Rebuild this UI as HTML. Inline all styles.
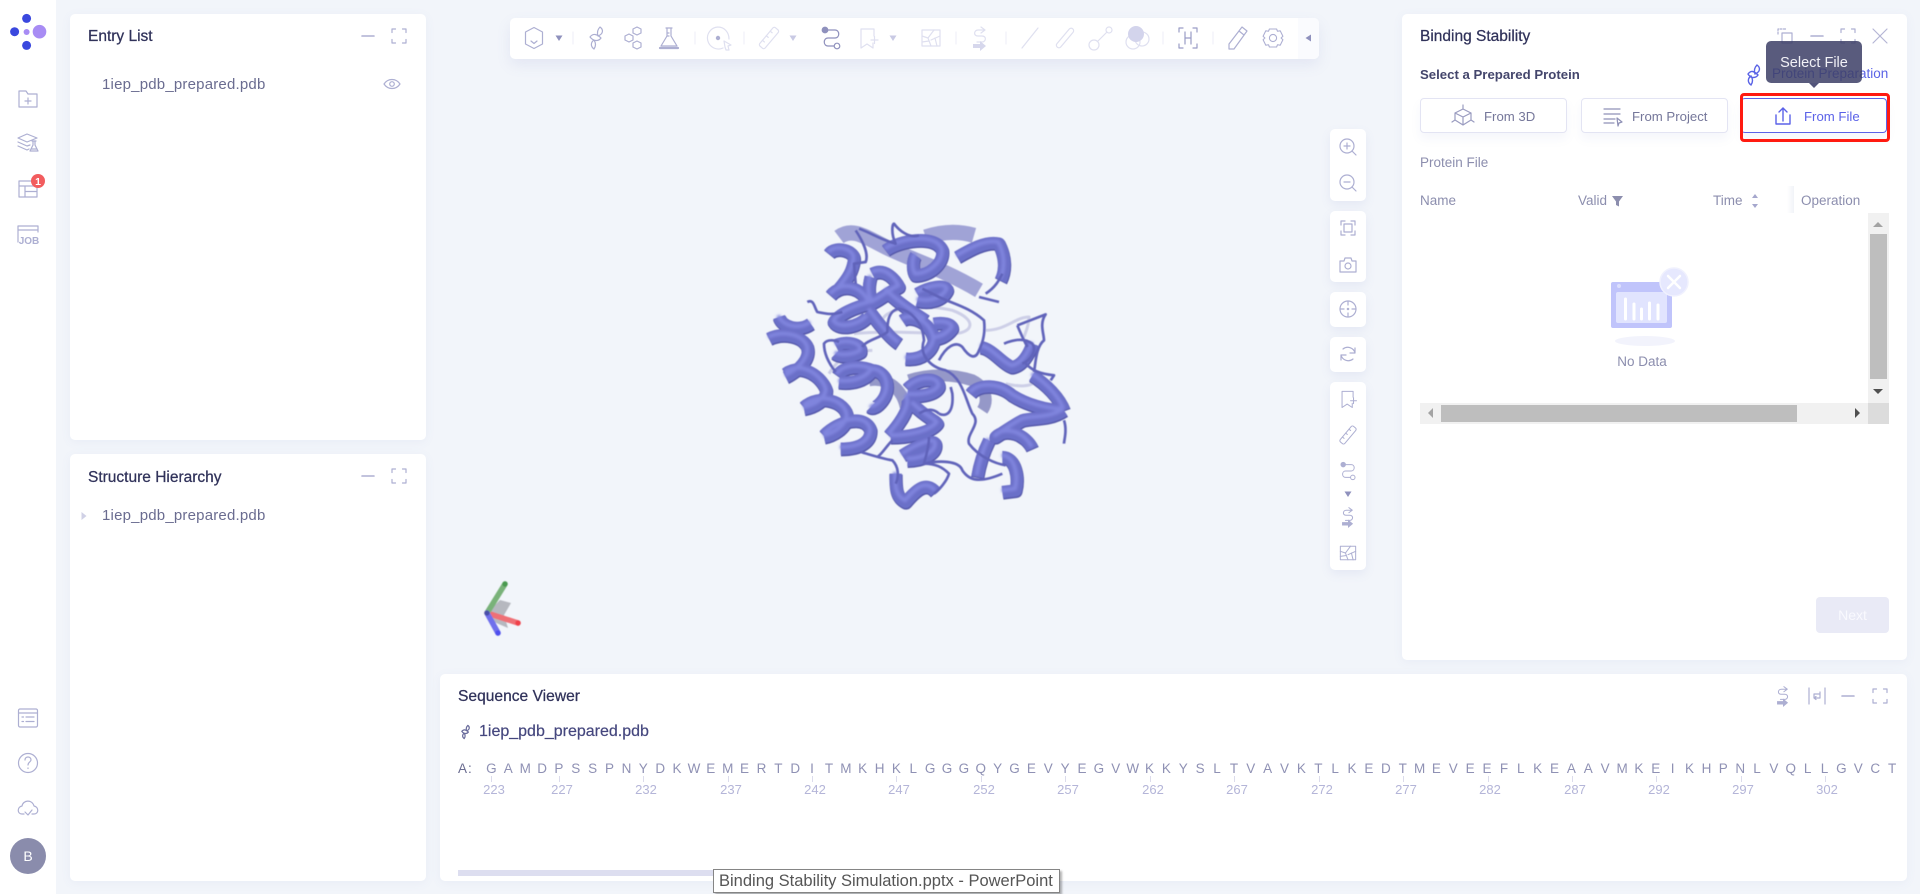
<!DOCTYPE html>
<html lang="en"><head><meta charset="utf-8"><title>Binding Stability</title>
<style>
html,body{margin:0;padding:0;width:1920px;height:894px;overflow:hidden;background:#f2f5fa;font-family:"Liberation Sans",sans-serif}
.p{position:absolute;background:#fff;border-radius:5px;box-shadow:0 2px 10px rgba(120,130,200,.07)}
.t{position:absolute;line-height:20px;white-space:nowrap}
.ti{font-size:15.5px;color:#30325a;-webkit-text-stroke:.25px #30325a}
.it{font-size:15px;color:#6a6c90}
.th{font-size:13.5px;color:#8c8eae}
.b{position:absolute;top:98px;height:35px;box-sizing:border-box;border:1px solid #e3e4f3;border-radius:4px;background:#fff;box-shadow:0 6px 10px rgba(120,130,200,.07)}
.bt{font-size:13.2px;color:#75779a;top:107px}
.n{position:absolute;top:780px;width:40px;margin-left:-20px;text-align:center;font-size:13px;line-height:20px;color:#b4b5d8}
.k{position:absolute;top:776px;width:1px;height:6px;background:#dcdcec}
#seq{position:absolute;left:483px;top:759px;white-space:nowrap;font-size:13.5px;line-height:20px;color:#8f91b4}
#seq i{display:inline-block;width:16.88px;text-align:center;font-style:normal}
svg{position:absolute;left:0;top:0}
</style></head><body>

<div class="p" style="left:0;top:0;width:56px;height:894px;border-radius:0;box-shadow:none"></div>
<div class="p" style="left:70px;top:14px;width:356px;height:426px"></div>
<div class="p" style="left:70px;top:454px;width:356px;height:427px"></div>
<div class="p" style="left:1402px;top:14px;width:505px;height:646px"></div>
<div class="p" style="left:440px;top:674px;width:1467px;height:207px"></div>
<div class="p" style="left:510px;top:18px;width:809px;height:41px;box-shadow:0 6px 14px rgba(120,130,200,.12)"></div>
<div style="position:absolute;left:1298px;top:18px;width:21px;height:41px;background:#fafbfe;border-radius:0 5px 5px 0"></div>
<div class="p" style="left:1330px;top:129px;width:36px;height:72px;box-shadow:0 4px 10px rgba(120,130,200,.1)"></div>
<div class="p" style="left:1330px;top:211px;width:36px;height:71px;box-shadow:0 4px 10px rgba(120,130,200,.1)"></div>
<div class="p" style="left:1330px;top:292px;width:36px;height:35px;box-shadow:0 4px 10px rgba(120,130,200,.1)"></div>
<div class="p" style="left:1330px;top:337px;width:36px;height:35px;box-shadow:0 4px 10px rgba(120,130,200,.1)"></div>
<div class="p" style="left:1330px;top:382px;width:36px;height:188px;box-shadow:0 4px 10px rgba(120,130,200,.1)"></div>

<!-- protein -->
<svg width="340" height="310" viewBox="0 0 1020 930" style="left:739px;top:207px" fill="none" stroke-linejoin="round">
<defs>
<filter id="bl"><feGaussianBlur stdDeviation="1.8"/></filter>
<filter id="bl2"><feGaussianBlur stdDeviation="4"/></filter>
<g id="thick">
<path d="M120 330C130 360 180 375 215 350"/>
<path d="M90 395C130 375 190 385 205 420C215 455 180 490 140 510"/>
<path d="M140 500C190 465 250 510 262 550C262 580 225 600 195 605"/>
<path d="M195 600C240 560 320 580 325 630C320 665 280 685 255 690"/>
<path d="M255 685C300 640 380 620 395 670C395 700 370 725 305 725"/>
<path d="M270 140C290 115 350 130 345 160C340 190 330 210 300 245"/>
<path d="M275 265C310 225 370 240 390 290C350 300 300 320 285 345C300 370 360 360 385 330"/>
<path d="M290 415C320 400 370 410 365 435C340 450 300 450 290 440"/>
<path d="M295 505C320 470 380 480 400 490C380 520 340 530 300 525"/>
<path d="M400 490C440 490 460 540 430 580C415 600 400 605 395 600"/>
<path d="M440 130C480 100 590 80 610 130C615 170 570 205 530 205C520 190 520 160 530 145"/>
<path d="M400 200C440 180 470 220 480 240C440 260 420 280 395 290"/>
<path d="M395 210C390 230 385 260 400 285"/>
<path d="M535 260C570 240 620 230 625 250C610 280 570 290 535 280"/>
<path d="M390 310C420 350 450 390 480 410"/>
<path d="M440 250C480 290 530 320 560 340"/>
<path d="M490 340C520 320 580 350 585 400C580 430 550 460 500 455"/>
<path d="M585 350C610 345 640 350 640 365C620 390 600 395 585 395"/>
<path d="M505 545C540 510 600 510 600 540C590 560 550 570 505 565"/>
<path d="M450 685C490 640 520 590 500 570"/>
<path d="M520 590C560 630 590 640 595 650C570 680 500 690 455 690"/>
<path d="M490 745C530 720 590 690 590 715C590 740 550 760 505 760"/>
<path d="M655 150C690 130 740 100 780 110C800 150 800 190 785 220"/>
<path d="M725 420C760 425 790 470 820 480C850 475 870 440 880 410"/>
<path d="M695 560C720 530 780 530 820 565C860 590 920 610 975 610"/>
<path d="M975 610C930 640 880 630 850 640C830 650 800 670 770 690C800 660 860 680 880 725"/>
<path d="M880 505C920 530 960 570 975 610"/>
<path d="M750 700C730 740 720 780 715 810"/>
<path d="M790 750C830 750 840 810 830 850L790 855"/>
<path d="M470 800C470 840 470 870 500 885C530 850 560 820 590 855"/>
</g>
<g id="thin">
<path d="M205 285C225 275 225 300 235 315C260 320 280 325 310 315"/>
<path d="M350 70C370 100 390 140 380 165L345 170L350 230"/>
<path d="M360 65C400 80 430 100 470 110C455 80 460 50 465 50C480 70 510 95 540 85"/>
<path d="M290 495C270 470 255 440 255 410C265 395 290 400 300 405"/>
<path d="M370 420C380 400 430 390 445 375C445 340 450 310 480 305C510 310 550 340 555 400C540 440 570 480 620 490C670 510 680 580 700 620C730 650 680 680 690 710C720 750 770 770 800 775"/>
<path d="M600 460C620 420 650 400 670 420C690 450 710 460 720 430C730 410 740 380 735 340C690 300 640 290 600 270L550 245"/>
<path d="M365 735C400 745 430 755 460 760C480 780 480 810 470 830"/>
<path d="M460 700C440 720 430 740 415 750"/>
<path d="M570 690C570 720 560 750 555 770C590 770 610 780 630 800C625 820 600 850 585 860"/>
<path d="M555 770C600 760 660 760 670 790C690 820 720 830 790 800"/>
<path d="M740 260C770 240 780 220 790 200M720 270L780 285"/>
<path d="M860 470C880 490 900 500 945 505L935 520"/>
<path d="M835 355L920 322C900 350 915 380 915 400C890 420 890 470 885 495M835 355C845 380 860 410 865 420"/>
<path d="M975 640C985 670 975 700 975 710"/>
<path d="M600 620C620 630 645 620 640 560L635 540"/>
<path d="M540 620C570 600 590 610 600 620"/>
<path d="M795 410C830 395 860 395 880 410C895 430 875 460 850 470"/>
</g>
</defs>
<g filter="url(#bl)">
<g stroke="#cdcfe7" stroke-width="9">
<path d="M430 340C440 300 560 290 640 310C720 340 700 380 640 380C560 380 450 370 345 380"/>
<path d="M270 500C300 450 340 430 400 430"/>
<path d="M740 370C800 370 830 330 870 330C870 350 860 380 850 400"/>
<path d="M800 530C840 540 880 540 890 520"/>
</g>
<g stroke="#a0a3d6" stroke-width="46">
<path d="M300 90C340 60 380 90 440 120C520 160 600 180 720 250"/>
<path d="M560 90C620 70 670 75 705 85"/>
</g>
<g stroke="#9598c8" stroke-width="36">
<path d="M390 520C450 510 490 550 500 600"/>
<path d="M510 520C570 500 640 500 700 520C740 540 750 580 730 610"/>
</g>
<use href="#thick" stroke="#5458aa" stroke-width="40" transform="translate(1 3)"/>
<use href="#thick" stroke="#6b6fc8" stroke-width="37"/>
<use href="#thick" stroke="#8085de" stroke-width="12" transform="translate(-2 -5)" filter="url(#bl2)"/>
<use href="#thin" stroke="#6064ba" stroke-width="8"/>
</g>
</svg>

<!-- axes -->
<svg width="60" height="70" viewBox="0 0 60 70" style="left:471px;top:575px" fill="none" stroke-linecap="round">
<g filter="url(#bl3)">
<path d="M29 25L40 28 33 40 37 53 23 47 16 38Z" fill="#8d8f97" opacity=".6"/>
<path d="M16 38L47 48" stroke="#ef7076" stroke-width="5.500"/>
<circle cx="47" cy="48" r="2.700" fill="#f04048"/>
<path d="M16 38L34 9" stroke="#79b279" stroke-width="5.500"/>
<circle cx="34" cy="9" r="2.700" fill="#4a9a50"/>
<path d="M16 38L27 58" stroke="#6f70ec" stroke-width="5.500"/>
<circle cx="27" cy="58" r="2.700" fill="#5050ee"/>
<circle cx="16" cy="38" r="2.600" fill="#4a4fa8"/>
</g>
<defs><filter id="bl3"><feGaussianBlur stdDeviation=".5"/></filter></defs>
</svg>

<!-- all icons in page coordinates -->
<svg width="1920" height="894" viewBox="0 0 1920 894" fill="none" stroke="#adafd2" stroke-width="1.200" stroke-linecap="round" stroke-linejoin="round">
<defs>
<path id="ex" d="M-7-3.500V-7H-3.500M3.500-7H7V-3.500M7 3.500V7H3.500M-3.500 7H-7V3.500"/>
<path id="mi" d="M-6 0H6" stroke-width="1.600"/>
<path id="tr" d="M-3.500-2.500H3.500L0 3Z" stroke="none"/>
<g id="sw"><path d="M4-8H-2C-6-8-7-2-2-2H2C7-2 6 4 2 4H-3M1-11L5-8 1-5"/><path d="M-7 6H0V3L6 8 0 13V10H-7Z" stroke="none" fill="currentColor"/></g>
<g id="bm"><path d="M6-2V-9H-7V10L-1 6 5 10V5M3 2H10M6.500-1.500V5.500"/></g>
<g id="pa"><circle cx="-6" cy="-8" r="2.800" fill="currentColor"/><path d="M-4-8H4C9-8 9 0 4 0H-3C-8 0-8 8-3 8H3"/><circle cx="6" cy="8" r="2.800"/></g>
<g id="ru"><g transform="rotate(40)"><rect x="-3.500" y="-12" width="7" height="24" rx="2"/><path d="M-3.500-6H-1M-3.500 0H-1M-3.500 6H-1"/></g></g>
<g id="mp"><rect x="-9" y="-8" width="18" height="16"/><path d="M-9-2L-3 0 3-8M-3 0L0 8M0 2L9-2M-9 4L-2 3M4 0L6 8"/></g>
<g id="dn"><path d="M3-11C7-8 6-4 1-2 0-5 0-8 3-11ZM-7-1C-4-5 0-4 4 0 2 3-3 4-7-1ZM-3 11C-7 8-6 4-3 2-1 5-1 8-3 11Z"/></g>
</defs>

<!-- logo -->
<g stroke="none">
<circle cx="26.600" cy="18.400" r="4.500" fill="#3a48de"/><circle cx="14.600" cy="31.700" r="4.500" fill="#3a48de"/><circle cx="26.600" cy="45.400" r="4.500" fill="#3a48de"/>
<circle cx="26.600" cy="32" r="3" fill="#a88cf4"/><circle cx="39.500" cy="31.700" r="6.800" fill="#a88cf4"/>
</g>
<!-- sidebar -->
<g transform="translate(28 99)"><path d="M-9-8H-2L0-5H9V8H-9Z"/><path d="M-3 2H3M0-1V5"/></g>
<g transform="translate(28 143)"><path d="M-10-5L-1-9 9-5-1-1ZM-10-1L-1 3 2 2M-10 3L-1 7 1 6"/><path d="M5-2V2L2 8H10L7 2V-2M4-2H8M3 6H9"/></g>
<g transform="translate(28 189)"><path d="M-9-8H9V8H-9ZM-9-3H9M-3-3V8M-3 2.500H9"/></g>
<g transform="translate(28 235)"><path d="M-10 7V-9H10V-3M-10-5H10"/><text x="1" y="9" font-family="Liberation Sans,sans-serif" font-size="10" font-weight="700" text-anchor="middle" fill="#adafd2" stroke="none">JOB</text></g>
<circle cx="38" cy="181" r="7" fill="#f25c5e" stroke="none"/>
<text x="38" y="185" font-family="Liberation Sans,sans-serif" font-size="10.500" font-weight="700" text-anchor="middle" fill="#fff" stroke="none">1</text>
<g transform="translate(28 718)"><rect x="-9.500" y="-9" width="19" height="18" rx="1.500"/><path d="M-9.500-5H9.500M-6-1H-4.500M-2-1H6M-6 3.500H-4.500M-2 3.500H6"/></g>
<g transform="translate(28 763)"><circle r="9.500"/><path d="M-3-3C-3-7 3-7 3-3 3-1 0-1 0 2"/><path d="M0 5V5.500"/></g>
<g transform="translate(28 808)"><path d="M-4 6H-6C-11 6-11-1-6-2-5-8 4-9 6-2 11-1 11 6 6 6H4"/><path d="M-3 4L0 7 4 2"/></g>
<circle cx="28" cy="856" r="18" fill="#8a8cac" stroke="none"/>

<!-- panel controls -->
<use href="#mi" x="368" y="36"/><use href="#ex" x="399" y="36"/>
<use href="#mi" x="368" y="476"/><use href="#ex" x="399" y="476"/>
<g transform="translate(392 84)"><path d="M-8 0C-4-6 4-6 8 0 4 6-4 6-8 0Z"/><circle r="2.300"/></g>
<path d="M81.500 512V520L86.500 516Z" fill="#d0d1e6" stroke="none"/>

<!-- top toolbar -->
<g>
<g transform="translate(534 38)"><path d="M0-10.500L8.500-6V6L0 10.500-8.500 6V-6Z"/><path d="M-3 3L0 5.500 3 3"/></g>
<use href="#tr" x="559" y="38" fill="#8f91bd"/>
<use href="#dn" x="597" y="38"/>
<g transform="translate(634 38)"><path d="M-1-9L3-11 7-9V-5L3-3-1-5ZM-9-2L-5-4-1-2V2L-5 4-9 2ZM-1 5L3 3 7 5V9L3 11-1 9Z"/></g>
<g transform="translate(669 38)"><path d="M-3-10H3M-2-10V-2L-8 8H8L2-2V-10M-2-5H0M-2-2H0"/><path d="M-9 10H9" stroke-width="2.200"/></g>
</g>
<g stroke="#dfe0f0">
<g transform="translate(718 38)"><path d="M0-11A11 11 0 1 0 5 10M0-11C6-11 11-6 11 1"/><circle r="1.600" fill="#adafd2" stroke="#adafd2"/><path d="M6 3L13 7 10 8 11 12 8 12 7 9Z"/></g>
<use href="#ru" x="769" y="38"/>
<use href="#tr" x="793" y="38" fill="#c9cae4"/>
<use href="#bm" x="868" y="38"/>
<use href="#tr" x="893" y="38" fill="#c9cae4"/>
<use href="#mp" x="931" y="38"/>
<use href="#sw" x="980" y="38" color="#d6d7ec"/>
<path d="M1022 48L1038 28"/>
<g transform="translate(1065 38) rotate(40)"><rect x="-2.500" y="-12" width="5" height="24" rx="2.500"/></g>
<g transform="translate(1101 38)"><circle cx="-7" cy="7" r="5"/><circle cx="8" cy="-8" r="3"/><path d="M-3 3L6-6"/></g>
<g transform="translate(1137 38)"><circle cx="-4" cy="4" r="7"/><circle cx="5" cy="1" r="7"/><circle cx="-1" cy="-4" r="8" fill="#d3d4ec" stroke="none"/></g>
</g>
<use href="#pa" x="831" y="38" color="#8f91bd" stroke="#8f91bd"/>
<path d="M573 32V44M695 32V44M744 32V44M956 32V44M1006 32V44M1163 32V44M1213 32V44" stroke="#f0f1f8"/>
<g transform="translate(1188 38)"><path d="M-5-10H-9V-6M5-10H9V-6M-5 10H-9V6M5 10H9V6M-3-6V6M3-6V6M-3 0H3" stroke="#9a9cc6"/></g>
<g transform="translate(1238 38)"><path d="M-9 11V6L4-11 9-7-4 11ZM1-7L6-3"/></g>
<g transform="translate(1273 38) scale(.9)"><path d="M-4-10H4L5-7.500 8-8 11-2 9 0 11 2 8 8 5 7.500 4 10H-4L-5 7.500-8 8-11 2-9 0-11-2-8-8-5-7.500Z"/><circle r="4"/></g>
<path d="M1311 34.500V41.500L1305.500 38Z" fill="#8f91bd" stroke="none"/>

<!-- side toolbar -->
<g transform="translate(1348 147)"><circle cx="-1" cy="-1" r="7"/><path d="M4 4L8 8M-4-1H2M-1-4V2"/></g>
<g transform="translate(1348 183)"><circle cx="-1" cy="-1" r="7"/><path d="M4 4L8 8M-4-1H2"/></g>
<g transform="translate(1348 228)"><path d="M-7-3V-7H-3M3-7H7V-3M7 3V7H3M-3 7H-7V3"/><rect x="-4" y="-4" width="8" height="8"/></g>
<g transform="translate(1348 265)"><path d="M-8-4H-4L-3-7H3L4-4H8V7H-8Z"/><circle cy="1" r="3"/></g>
<g transform="translate(1348 309)"><circle r="8"/><path d="M0-8V-4M0 4V8M-8 0H-4M4 0H8"/><circle r=".7"/></g>
<g transform="translate(1348 354)"><path d="M7-1A7.500 7.500 0 0 0-5-5M-7 1A7.500 7.500 0 0 0 5 5M7-6V-1H2M-7 6V1H-2"/></g>
<g transform="translate(1348 399) scale(.85)"><use href="#bm"/></g>
<g transform="translate(1348 435) scale(.85)"><use href="#ru"/></g>
<g transform="translate(1348 471) scale(.8)" color="#adafd2"><use href="#pa"/></g>
<use href="#tr" x="1348" y="494" fill="#8f91bd"/>
<g transform="translate(1348 517) scale(.85)" color="#adafd2"><use href="#sw"/></g>
<g transform="translate(1348 553) scale(.85)"><use href="#mp"/></g>

<!-- right panel -->
<g transform="translate(1785 36)"><path d="M-7-2V-7H1" stroke-dasharray="2 1.500"/><rect x="-3" y="-3" width="10" height="10"/></g>
<use href="#mi" x="1817" y="36"/><use href="#ex" x="1848" y="36"/>
<path d="M1873 29L1887 43M1887 29L1873 43" stroke="#b5b6d4"/>

<!-- no data -->
<ellipse cx="1645" cy="341" rx="30" ry="5" fill="#f2f3fc" stroke="none"/>
<rect x="1611" y="282" width="61" height="46" rx="2" fill="#c0c4fb" stroke="none"/>
<circle cx="1619" cy="286" r="2" fill="#dcdffd" stroke="none"/>
<rect x="1616" y="292" width="51" height="31" rx="2" fill="#e1e4fe" stroke="none"/>
<path d="M1625.500 299V319M1634 304V319M1641.500 309V319M1649.500 303V319M1658 305V319" stroke="#fff" stroke-width="3"/>
<circle cx="1674" cy="282" r="14" fill="#e6e8fe" stroke="#f0f1fe" stroke-width="1.500"/>
<path d="M1668 276L1680 288M1680 276L1668 288" stroke="#fff" stroke-width="2.500"/>

<!-- sequence -->
<g transform="translate(1783 696) scale(.85)" color="#adafd2"><use href="#sw"/></g>
<g transform="translate(1817 696)"><path d="M-8-8V8M8-8V8M3-2H-3V2H3M-3 2L-1 .5M-3 2L-1 3.500M3-4V2"/></g>
<use href="#mi" x="1848" y="696"/><use href="#ex" x="1880" y="696"/>
<g transform="translate(466 732) scale(.6)" stroke="#6a6c9c" stroke-width="2"><use href="#dn"/></g>
</svg>

<!-- text -->
<div class="t ti" style="left:88px;top:27px">Entry List</div>
<div class="t it" style="left:102px;top:75px;letter-spacing:.2px">1iep_pdb_prepared.pdb</div>
<div class="t ti" style="left:88px;top:468px">Structure Hierarchy</div>
<div class="t it" style="left:102px;top:506px;letter-spacing:.2px">1iep_pdb_prepared.pdb</div>
<div class="t" style="left:28px;top:846px;width:0;display:flex;justify-content:center;color:#fff;font-size:14px">B</div>

<div class="t ti" style="left:1420px;top:27px">Binding Stability</div>
<div class="t" style="left:1420px;top:65px;font-size:13.200px;font-weight:700;color:#44466c">Select a Prepared Protein</div>
<svg width="20" height="24" viewBox="-10 -12 20 24" style="left:1744px;top:63px" fill="none" stroke="#5a63e6" stroke-width="1.400"><path d="M3-10C7-7 6-3 1-1 0-4 0-7 3-10ZM-6-1C-3-5 0-4 4 0 2 3-3 4-6-1ZM-3 10C-7 7-6 3-3 1-1 4-1 7-3 10Z"/></svg>
<div class="t" style="left:1772px;top:64px;font-size:13.500px;color:#5a63e6">Protein Preparation</div>

<div class="b" style="left:1420px;width:147px"></div>
<div class="b" style="left:1581px;width:147px"></div>
<div class="b" style="left:1741px;width:146px;border:1.500px solid #5b62e8;border-left:0"></div>
<svg width="1920" height="150" viewBox="0 0 1920 150" fill="none" stroke-linecap="round" stroke-linejoin="round">
<g transform="translate(1463 116)" stroke="#9a9cc0" stroke-width="1.200"><path d="M-8-3L0-7 8-3V4L0 9-8 4ZM-8-3L0 1 8-3M0 1V9M0-7V-11M-8 4L-11 6M8 4L11 6"/></g>
<g transform="translate(1612 116)" stroke="#8f91b6" stroke-width="1.200"><path d="M-8-7H8M-8-2H8M-8 3H3M-8 7H2M5 2L10 6 7 7 6 10Z"/></g>
<g transform="translate(1783 116)" stroke="#5b62e8" stroke-width="1.400"><path d="M-7-1V8H7V-1M0 5V-8M-4-4L0-8 4-4"/></g>
</svg>
<div class="t bt" style="left:1484px">From 3D</div>
<div class="t bt" style="left:1632px">From Project</div>
<div class="t bt" style="left:1804px;color:#5b62e8">From File</div>
<div style="position:absolute;left:1740px;top:93px;width:150px;height:49px;box-sizing:border-box;border:3.500px solid #ff1a10;border-radius:4px"></div>

<div style="position:absolute;left:1766px;top:41px;width:96px;height:42px;background:rgba(62,64,104,.86);border-radius:5px"></div>
<div style="position:absolute;left:1809px;top:83px;width:0;height:0;border:5px solid transparent;border-top-color:#52547a;border-bottom:0"></div>
<div class="t" style="left:1766px;width:96px;top:53px;text-align:center;font-size:14.500px;color:#f2f2f7">Select File</div>

<div class="t th" style="left:1420px;top:153px">Protein File</div>
<div class="t th" style="left:1420px;top:191px">Name</div>
<div class="t th" style="left:1578px;top:191px">Valid</div>
<div class="t th" style="left:1713px;top:191px">Time</div>
<div class="t th" style="left:1801px;top:191px">Operation</div>
<div style="position:absolute;left:1787px;top:186px;width:7px;height:27px;background:linear-gradient(90deg,#fff,#f1f3f8)"></div>
<svg width="1920" height="440" viewBox="0 0 1920 440">
<path d="M1612 196H1623L1619 201.500V206.500L1616 205V201.500Z" fill="#8c8eae"/>
<path d="M1752 198H1758L1755 194ZM1752 204H1758L1755 208Z" fill="#a5a7cd"/>
<rect x="1868" y="213" width="21" height="190" fill="#f1f1f1"/>
<rect x="1870" y="234" width="17" height="145" fill="#bebebe"/>
<path d="M1873 227H1883L1878 222Z" fill="#a3a3a3"/>
<path d="M1873 389H1883L1878 394Z" fill="#505050"/>
<rect x="1420" y="403" width="448" height="21" fill="#f1f1f1"/>
<rect x="1441" y="405" width="356" height="17" fill="#bebebe"/>
<rect x="1868" y="403" width="21" height="21" fill="#dcdcdc"/>
<path d="M1433 408V418L1428 413Z" fill="#a3a3a3"/>
<path d="M1855 408V418L1860 413Z" fill="#505050"/>
</svg>
<div class="t" style="left:1612px;width:60px;top:352px;text-align:center;font-size:13.500px;color:#8c8eae">No Data</div>
<div style="position:absolute;left:1816px;top:597px;width:73px;height:36px;border-radius:4px;background:#e9eaf6;color:#f9f9fe;font-size:14px;line-height:36px;text-align:center">Next</div>

<div class="t ti" style="left:458px;top:687px;font-size:15.600px">Sequence Viewer</div>
<div class="t" style="left:479px;top:722px;font-size:16px;color:#45477e;-webkit-text-stroke:.2px #45477e">1iep_pdb_prepared.pdb</div>
<div class="t" style="left:458px;top:759px;font-size:13.500px;color:#6a6c90;letter-spacing:1px">A:</div>
<div id="seq"><i>G</i><i>A</i><i>M</i><i>D</i><i>P</i><i>S</i><i>S</i><i>P</i><i>N</i><i>Y</i><i>D</i><i>K</i><i>W</i><i>E</i><i>M</i><i>E</i><i>R</i><i>T</i><i>D</i><i>I</i><i>T</i><i>M</i><i>K</i><i>H</i><i>K</i><i>L</i><i>G</i><i>G</i><i>G</i><i>Q</i><i>Y</i><i>G</i><i>E</i><i>V</i><i>Y</i><i>E</i><i>G</i><i>V</i><i>W</i><i>K</i><i>K</i><i>Y</i><i>S</i><i>L</i><i>T</i><i>V</i><i>A</i><i>V</i><i>K</i><i>T</i><i>L</i><i>K</i><i>E</i><i>D</i><i>T</i><i>M</i><i>E</i><i>V</i><i>E</i><i>E</i><i>F</i><i>L</i><i>K</i><i>E</i><i>A</i><i>A</i><i>V</i><i>M</i><i>K</i><i>E</i><i>I</i><i>K</i><i>H</i><i>P</i><i>N</i><i>L</i><i>V</i><i>Q</i><i>L</i><i>L</i><i>G</i><i>V</i><i>C</i><i>T</i></div>
<div class="k" style="left:491px"></div><div class="k" style="left:559px"></div><div class="k" style="left:643px"></div><div class="k" style="left:728px"></div><div class="k" style="left:812px"></div><div class="k" style="left:896px"></div><div class="k" style="left:981px"></div><div class="k" style="left:1065px"></div><div class="k" style="left:1150px"></div><div class="k" style="left:1234px"></div><div class="k" style="left:1319px"></div><div class="k" style="left:1403px"></div><div class="k" style="left:1488px"></div><div class="k" style="left:1572px"></div><div class="k" style="left:1656px"></div><div class="k" style="left:1741px"></div><div class="k" style="left:1825px"></div>
<div class="n" style="left:494px">223</div><div class="n" style="left:562px">227</div><div class="n" style="left:646px">232</div><div class="n" style="left:731px">237</div><div class="n" style="left:815px">242</div><div class="n" style="left:899px">247</div><div class="n" style="left:984px">252</div><div class="n" style="left:1068px">257</div><div class="n" style="left:1153px">262</div><div class="n" style="left:1237px">267</div><div class="n" style="left:1322px">272</div><div class="n" style="left:1406px">277</div><div class="n" style="left:1490px">282</div><div class="n" style="left:1575px">287</div><div class="n" style="left:1659px">292</div><div class="n" style="left:1743px">297</div><div class="n" style="left:1827px">302</div>
<div style="position:absolute;left:458px;top:870px;width:256px;height:6px;background:#dddef0"></div>
<div class="t" style="left:713px;top:869px;width:347px;height:24px;box-sizing:border-box;background:#fff;border:1px solid #858585;box-shadow:2px 2px 2px rgba(0,0,0,.3);font-size:16.500px;line-height:22px;color:#555;padding-left:5px">Binding Stability Simulation.pptx - PowerPoint</div>
</body></html>
